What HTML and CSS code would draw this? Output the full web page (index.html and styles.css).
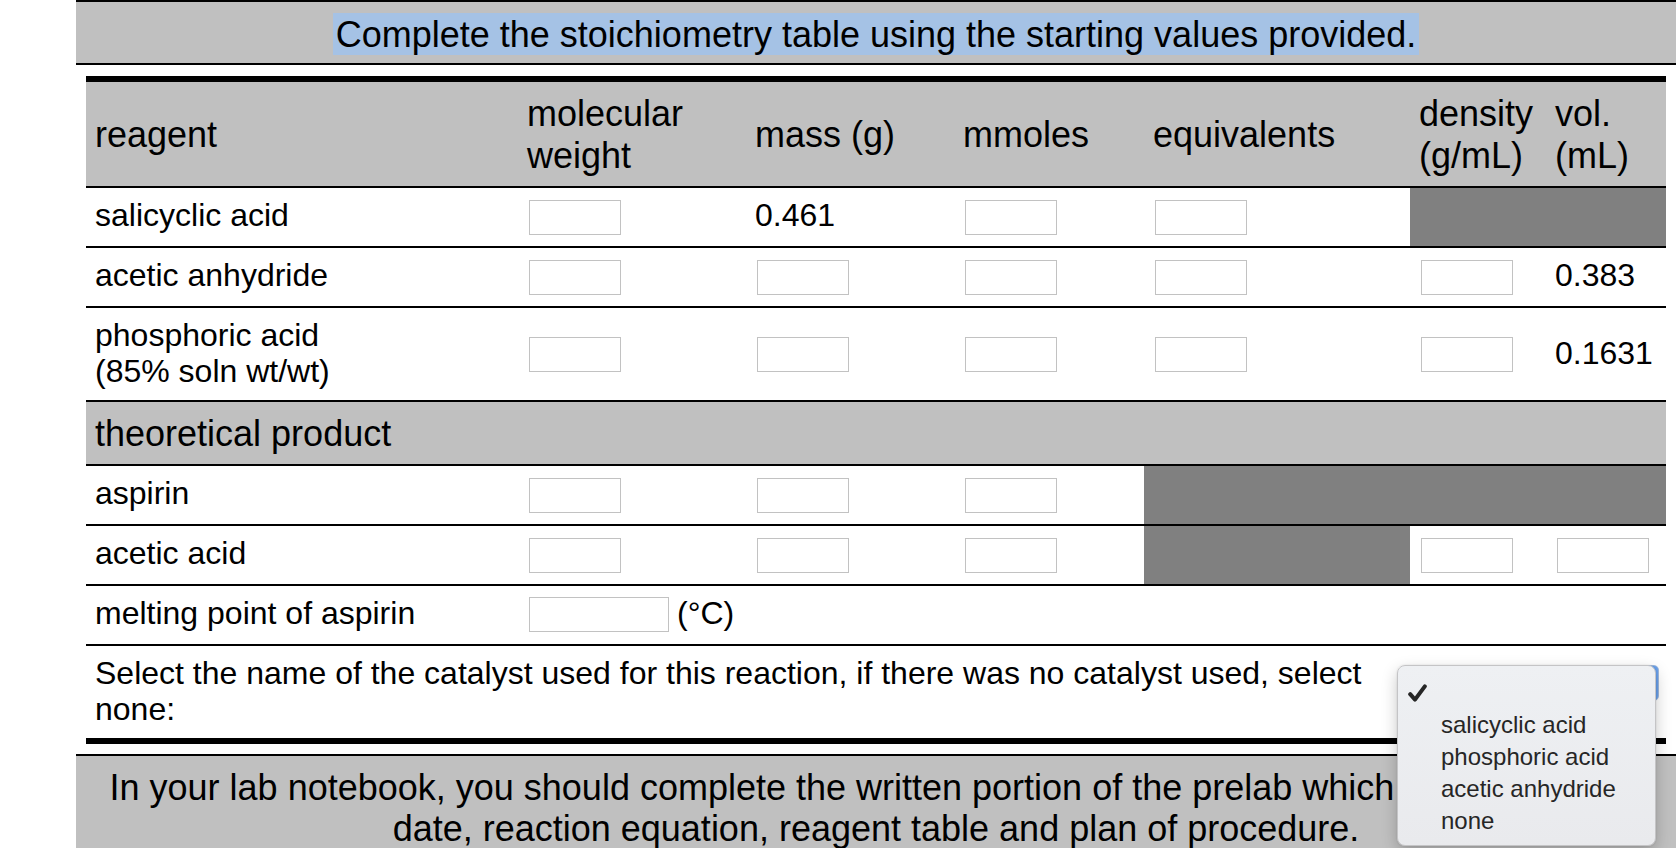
FILE: index.html
```html
<!DOCTYPE html>
<html lang="en">
<head>
<meta charset="utf-8">
<title>Stoichiometry table</title>
<link rel="stylesheet" href="styles.css">
</head>
<body>
<div class="page">
  <div class="title-band"><span class="hl">Complete the stoichiometry table using the starting values provided.</span></div>

  <table class="stoich">
    <colgroup>
      <col class="c1"><col class="c2"><col class="c3"><col class="c4"><col class="c5"><col class="c6"><col class="c7">
    </colgroup>
    <tr class="head">
      <th>reagent</th>
      <th>molecular weight</th>
      <th>mass (g)</th>
      <th>mmoles</th>
      <th>equivalents</th>
      <th>density (g/mL)</th>
      <th>vol. (mL)</th>
    </tr>
    <tr>
      <td>salicyclic acid</td>
      <td class="in"><input class="box" type="text"></td>
      <td>0.461</td>
      <td class="in"><input class="box" type="text"></td>
      <td class="in"><input class="box" type="text"></td>
      <td class="dark" colspan="2"></td>
    </tr>
    <tr>
      <td>acetic anhydride</td>
      <td class="in"><input class="box" type="text"></td>
      <td class="in"><input class="box" type="text"></td>
      <td class="in"><input class="box" type="text"></td>
      <td class="in"><input class="box" type="text"></td>
      <td class="in"><input class="box" type="text"></td>
      <td>0.383</td>
    </tr>
    <tr class="tall">
      <td>phosphoric acid<br>(85% soln wt/wt)</td>
      <td class="in"><input class="box" type="text"></td>
      <td class="in"><input class="box" type="text"></td>
      <td class="in"><input class="box" type="text"></td>
      <td class="in"><input class="box" type="text"></td>
      <td class="in"><input class="box" type="text"></td>
      <td>0.1631</td>
    </tr>
    <tr class="sub">
      <th colspan="7">theoretical product</th>
    </tr>
    <tr>
      <td>aspirin</td>
      <td class="in"><input class="box" type="text"></td>
      <td class="in"><input class="box" type="text"></td>
      <td class="in"><input class="box" type="text"></td>
      <td class="dark" colspan="3"></td>
    </tr>
    <tr>
      <td>acetic acid</td>
      <td class="in"><input class="box" type="text"></td>
      <td class="in"><input class="box" type="text"></td>
      <td class="in"><input class="box" type="text"></td>
      <td class="dark"></td>
      <td class="in"><input class="box" type="text"></td>
      <td class="in"><input class="box" type="text"></td>
    </tr>
    <tr>
      <td>melting point of aspirin</td>
      <td colspan="6"><div class="mp"><input class="box wide" type="text"><span>(°C)</span></div></td>
    </tr>
    <tr class="tall last">
      <td colspan="5">Select the name of the catalyst used for this reaction, if there was no catalyst used, select none:</td>
      <td class="selcell" colspan="2"><div class="select"></div></td>
    </tr>
  </table>

  <div class="note">In your lab notebook, you should complete the written portion of the prelab which includes a title, date, reaction equation, reagent table and plan of procedure.</div>

  <div class="popup">
    <div class="opt"><span class="mark"><svg width="19" height="18" viewBox="0 0 19 18"><path d="M2.2 10.2 L7 15.6 L16.8 2.4" fill="none" stroke="#262626" stroke-width="4" stroke-linecap="round" stroke-linejoin="round"/></svg></span></div>
    <div class="opt"><span class="mark"></span>salicyclic acid</div>
    <div class="opt"><span class="mark"></span>phosphoric acid</div>
    <div class="opt"><span class="mark"></span>acetic anhydride</div>
    <div class="opt"><span class="mark"></span>none</div>
  </div>
</div>
</body>
</html>
```

FILE: styles.css
```css
html {
  overflow: hidden;
}

body {
  margin: 0;
  background: #fff;
  color: #000;
  font-family: "Liberation Sans", Arial, Helvetica, sans-serif;
}

.page {
  position: relative;
  margin-left: 76px;
  width: 1600px;
}

.title-band {
  height: 61px;
  background: #c0c0c0;
  border-top: 2px solid #000;
  border-bottom: 2px solid #000;
  display: flex;
  align-items: center;
  justify-content: center;
  font-size: 36px;
}

.hl {
  display: inline-block;
  box-sizing: border-box;
  height: 42px;
  margin-top: 2px;
  padding: 2px 3px 0;
  line-height: 40px;
  background: #a5c2e5;
}

.stoich {
  margin: 11px 10px 0;
  width: 1580px;
  table-layout: fixed;
  border-collapse: separate;
  border-spacing: 0;
  border-top: 6px solid #000;
}

.c1 { width: 432px; }
.c2 { width: 228px; }
.c3 { width: 208px; }
.c4 { width: 190px; }
.c5 { width: 266px; }
.c6 { width: 136px; }
.c7 { width: 120px; }

.stoich th {
  background: #c0c0c0;
  font-weight: normal;
  text-align: left;
  font-size: 36px;
  line-height: 42px;
  padding: 11px 9px 9px;
  vertical-align: middle;
  border-bottom: 2px solid #000;
}

.stoich td {
  font-size: 32px;
  line-height: 36px;
  padding: 9px 9px 13px;
  vertical-align: middle;
  border-bottom: 2px solid #000;
}

.stoich .tall td {
  padding-bottom: 11px;
}

.stoich td.in {
  padding: 11px 9px;
}

.stoich .last td {
  border-bottom: 6px solid #000;
}

.stoich td.dark {
  background: #808080;
}

.box {
  display: block;
  box-sizing: border-box;
  width: 92px;
  height: 35px;
  margin: 0 0 0 2px;
  padding: 0 4px;
  border: 1px solid #c2c2c2;
  border-radius: 0;
  background: #fff;
  font: 16px "Liberation Sans", Arial, sans-serif;
  outline: none;
}

.box.wide {
  width: 140px;
  margin-top: 2px;
}

.mp {
  display: flex;
  align-items: flex-start;
  gap: 8px;
  height: 36px;
}

.stoich td.selcell {
  vertical-align: top;
}

.select {
  box-sizing: border-box;
  width: 240px;
  height: 36px;
  margin-top: 10px;
  border: 1px solid #9fb9dd;
  border-radius: 5px;
  background: linear-gradient(90deg, #fff 0 214px, #6aa2ee 214px);
}

.note {
  margin-top: 10px;
  border-top: 2px solid #000;
  background: #c0c0c0;
  padding: 11px 20px 20px;
  font-size: 36px;
  line-height: 41px;
  text-align: center;
}

.popup {
  position: absolute;
  left: 1321px;
  top: 665px;
  box-sizing: border-box;
  width: 259px;
  height: 181px;
  padding: 11px 0 8px;
  border: 1px solid #c4c4c6;
  border-radius: 8px;
  background: linear-gradient(180deg, #eef0f3 0%, #e9eaed 100%);
  box-shadow: 0 6px 16px rgba(0, 0, 0, 0.22), 0 0 2px rgba(0, 0, 0, 0.12);
  font-family: "Liberation Sans", Arial, sans-serif;
  font-size: 24px;
  color: #262626;
}

.opt {
  display: flex;
  align-items: center;
  height: 32px;
  line-height: 32px;
}

.mark {
  display: flex;
  align-items: center;
  box-sizing: border-box;
  width: 43px;
  padding-left: 10px;
  flex: none;
}
```
